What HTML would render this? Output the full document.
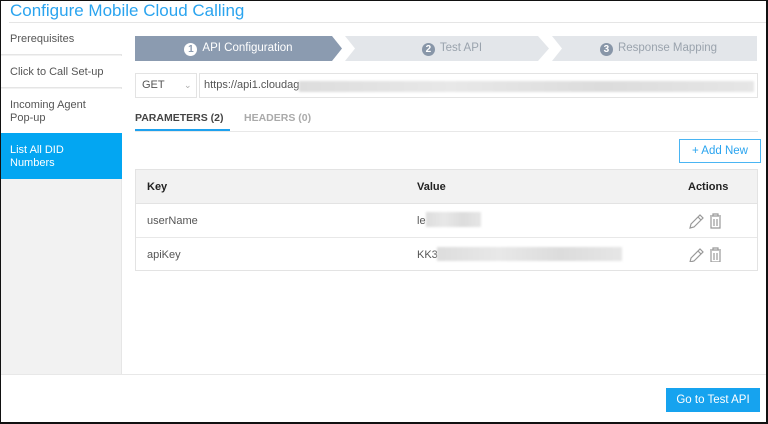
<!DOCTYPE html>
<html><head><style>
*{margin:0;padding:0;box-sizing:border-box}
body{width:768px;height:424px;overflow:hidden;font-family:"Liberation Sans",sans-serif;font-size:11px;color:#333;background:#fff;position:relative}
.frame{position:absolute;left:0;top:0;width:768px;height:424px;border:1px solid #111;border-width:1px 2px 2px 1px;pointer-events:none}
.abs{position:absolute}
.title{left:10px;top:1px;font-size:17px;color:#2aa4ef}
.side{left:1px;top:23px;width:121px;height:351px;background:#f2f2f2;border-right:1px solid #e6e6e6}
.it{position:absolute;left:0;width:121px;background:#fff;padding-left:9px;color:#555;font-size:11px}
.step{top:36px;height:25px;color:#9aa3ad;font-size:11.5px;line-height:25px}
.num{display:inline-block;width:13px;height:13px;border-radius:50%;background:#8896a8;color:#fff;font-size:10px;font-weight:bold;line-height:13px;text-align:center;margin-right:5px;vertical-align:-1px}
.blur{background:linear-gradient(90deg,#ddd,#e8e8e8,#dcdcdc,#e6e6e6);filter:blur(1px)}
th,td{text-align:left}
</style></head><body>
<div class="abs title">Configure Mobile Cloud Calling</div>
<div class="abs" style="left:9px;top:22px;width:757px;height:1px;background:#e5e5e5"></div>
<div class="abs side">
<div class="it" style="top:0;height:32px;line-height:32px;border-bottom:1px solid #e5e5e5">Prerequisites</div>
<div class="it" style="top:33px;height:32px;line-height:32px;border-bottom:1px solid #e5e5e5">Click to Call Set-up</div>
<div class="it" style="top:66px;height:44px;padding-top:10px;line-height:13px">Incoming Agent<br>Pop-up</div>
<div class="it" style="top:110px;height:46px;padding-top:11px;line-height:13px;background:#03a6f2;color:#fff">List All DID<br>Numbers</div>
</div>
<svg class="abs" style="left:135px;top:36px" width="623" height="25">
<polygon points="0,0 197,0 207,12.5 197,25 0,25" fill="#8b9bb0"/>
<polygon points="210,0 403,0 414,12.5 403,25 210,25 220,12.5" fill="#e3e6ea"/>
<polygon points="417,0 622,0 622,25 417,25 427,12.5" fill="#e3e6ea"/>
</svg>
<div class="abs step" style="left:135px;width:207px;text-align:center;color:#fff"><span class="num" style="background:#fff;color:#8b9bb0">1</span>API Configuration</div>
<div class="abs step" style="left:355px;width:194px;text-align:center"><span class="num">2</span>Test API</div>
<div class="abs step" style="left:560px;width:197px;text-align:center"><span class="num">3</span>Response Mapping</div>
<div class="abs" style="left:135px;top:73px;width:62px;height:25px;border:1px solid #e3e3e3;line-height:23px;padding-left:6px;color:#555">GET<span style="position:absolute;left:48px;color:#aaa;font-size:9px">&#8964;</span></div>
<div class="abs" style="left:199px;top:73px;width:559px;height:25px;border:1px solid #e3e3e3;line-height:23px;padding-left:4px;color:#555">https://api1.cloudag</div>
<div class="abs blur" style="left:299px;top:81px;width:455px;height:11px"></div>
<div class="abs" style="left:135px;top:112px;font-size:10.5px;font-weight:bold;color:#444">PARAMETERS (2)</div>
<div class="abs" style="left:244px;top:112px;font-size:10.5px;font-weight:bold;color:#aaa">HEADERS (0)</div>
<div class="abs" style="left:135px;top:131px;width:623px;height:1px;background:#e8e8e8"></div>
<div class="abs" style="left:135px;top:129px;width:95px;height:2px;background:#1ea1ee"></div>
<div class="abs" style="left:679px;top:139px;width:82px;height:24px;border:1px solid #4ab5f3;color:#2aa4ef;text-align:center;line-height:22px;font-size:11.5px">+ Add New</div>
<div class="abs" style="left:135px;top:169px;width:623px;height:102px;border:1px solid #e3e3e3">
<div class="abs" style="left:0;top:0;width:621px;height:34px;background:#f2f2f2;border-bottom:1px solid #e3e3e3"></div>
<div class="abs" style="left:0;top:67px;width:621px;height:1px;background:#e8e8e8"></div>
<div class="abs" style="left:11px;top:11px;font-weight:bold;color:#222">Key</div>
<div class="abs" style="left:281px;top:11px;font-weight:bold;color:#222">Value</div>
<div class="abs" style="left:552px;top:11px;font-weight:bold;color:#222">Actions</div>
<div class="abs" style="left:11px;top:45px;color:#555">userName</div>
<div class="abs" style="left:281px;top:45px;color:#555">le</div>
<div class="abs blur" style="left:290px;top:42px;width:55px;height:15px"></div>
<div class="abs" style="left:11px;top:79px;color:#555">apiKey</div>
<div class="abs" style="left:281px;top:79px;color:#555">KK3</div>
<div class="abs blur" style="left:301px;top:77px;width:185px;height:14px"></div>
<svg class="abs" style="left:552px;top:42px" width="40" height="50" fill="none" stroke="#999" stroke-width="1.2">
<path d="M2,16 L3,12 L12,3 L15,6 L6,15 Z M10,5 L13,8"/>
<path d="M22,4 H33 M25,4 V2 H30 V4 M23,5 V16 H32 V5 M26,7 V14 M29,7 V14"/>
<g transform="translate(0,34)"><path d="M2,16 L3,12 L12,3 L15,6 L6,15 Z M10,5 L13,8"/>
<path d="M22,4 H33 M25,4 V2 H30 V4 M23,5 V16 H32 V5 M26,7 V14 M29,7 V14"/></g>
</svg>
</div>
<div class="abs" style="left:1px;top:374px;width:765px;height:1px;background:#e8e8e8"></div>
<div class="abs" style="left:666px;top:388px;width:94px;height:24px;background:#16a3ef;color:#fff;text-align:center;line-height:24px;font-size:11.5px">Go to Test API</div>
<div class="frame"></div>
</body></html>
